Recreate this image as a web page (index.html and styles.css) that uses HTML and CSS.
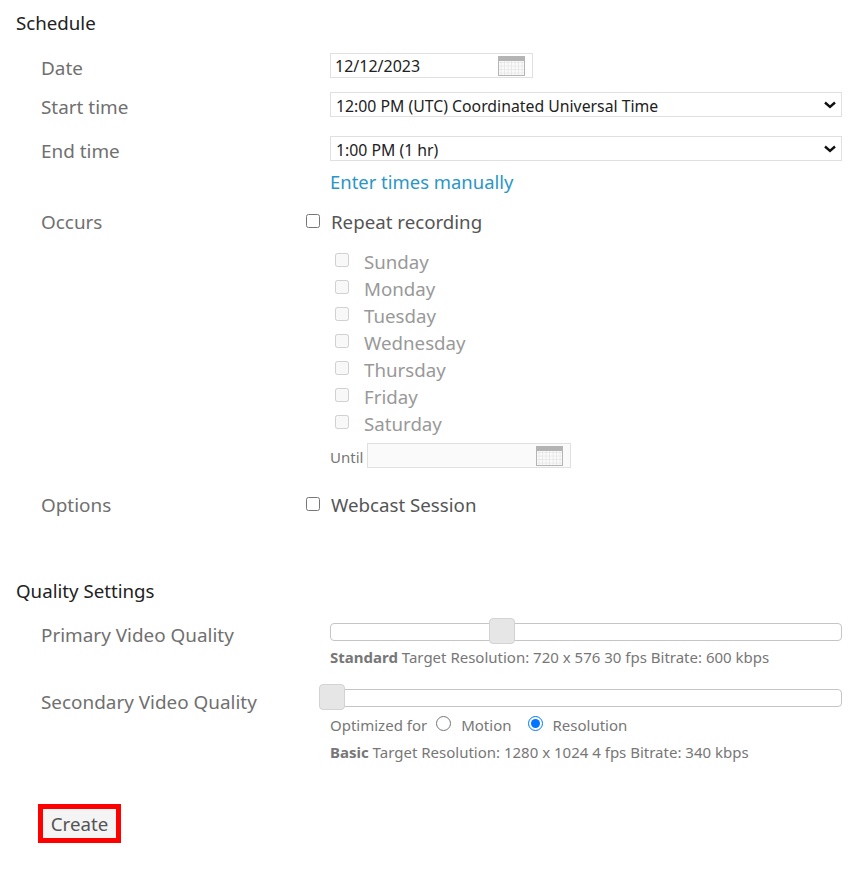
FILE: index.html
```html
<!DOCTYPE html>
<html>
  <head>
    <meta charset="utf-8" />
    <title>Schedule</title>
    <link rel="stylesheet" href="styles.css">
  </head>

  <body>
    <form class="page">
      <h3 class="section-title">Schedule</h3>

      <div class="row row-date">
        <label class="row-label">Date</label>
        <div class="date-input">
          <span class="date-value">12/12/2023</span>
          <svg class="cal-icon" viewBox="0 0 27 20"><use href="#cal"></use></svg>
        </div>
      </div>

      <div class="row row-start">
        <label class="row-label">Start time</label>
        <select class="time-select"><option>12:00 PM (UTC) Coordinated Universal Time</option></select>
      </div>

      <div class="row row-end">
        <label class="row-label">End time</label>
        <div>
          <select class="time-select"><option>1:00 PM (1 hr)</option></select>
          <a class="manual-link" href="#">Enter times manually</a>
        </div>
      </div>

      <div class="row row-occurs">
        <label class="row-label">Occurs</label>
        <label class="check-line"><input type="checkbox"> Repeat recording</label>
      </div>

      <div class="row">
        <span></span>
        <div class="days">
          <label class="day"><input type="checkbox" disabled> Sunday</label>
          <label class="day"><input type="checkbox" disabled> Monday</label>
          <label class="day"><input type="checkbox" disabled> Tuesday</label>
          <label class="day"><input type="checkbox" disabled> Wednesday</label>
          <label class="day"><input type="checkbox" disabled> Thursday</label>
          <label class="day"><input type="checkbox" disabled> Friday</label>
          <label class="day"><input type="checkbox" disabled> Saturday</label>
          <div class="until">
            <span class="until-label">Until</span>
            <div class="date-input disabled">
              <svg class="cal-icon" viewBox="0 0 27 20"><use href="#cal"></use></svg>
            </div>
          </div>
        </div>
      </div>

      <div class="row row-options">
        <label class="row-label">Options</label>
        <label class="check-line"><input type="checkbox"> Webcast Session</label>
      </div>

      <h3 class="section-title quality-title">Quality Settings</h3>

      <div class="row row-primary">
        <label class="row-label">Primary Video Quality</label>
        <div>
          <div class="slider"><span class="handle handle-standard"></span></div>
          <p class="quality-note"><b>Standard</b> Target Resolution: 720 x 576 30 fps Bitrate: 600 kbps</p>
        </div>
      </div>

      <div class="row row-secondary">
        <label class="row-label">Secondary Video Quality</label>
        <div>
          <div class="slider"><span class="handle handle-basic"></span></div>
          <div class="optimized">
            <span>Optimized for</span>
            <label class="radio"><input type="radio" name="optimize"> Motion</label>
            <label class="radio"><input type="radio" name="optimize" checked> Resolution</label>
          </div>
          <p class="quality-note basic-note"><b>Basic</b> Target Resolution: 1280 x 1024 4 fps Bitrate: 340 kbps</p>
        </div>
      </div>

      <button type="button" class="create-button">Create</button>
    </form>

    <svg width="0" height="0" class="defs">
      <defs>
        <pattern id="cal-grid" width="3.5" height="3.5" patternUnits="userSpaceOnUse">
          <path d="M3.5 0V3.5H0" fill="none" stroke="#dcdcdc" stroke-width="1"></path>
        </pattern>
        <g id="cal">
          <rect x="0" y="0" width="27" height="20" fill="#b4b4b4"></rect>
          <rect x="1" y="5" width="25" height="14" fill="#fafafa"></rect>
          <rect x="1" y="5" width="25" height="14" fill="url(#cal-grid)"></rect>
        </g>
      </defs>
    </svg>
  </body>
</html>
```

FILE: styles.css
```css
body {
  margin: 0;
  font-family: 'Noto Sans', 'Open Sans', sans-serif;
  background: white;
  color: #333;
}

.page {
  padding: 11px 20px 33px 16px;
}

.defs {
  display: block;
  height: 0;
}

.section-title {
  margin: 0;
  font-size: 18.7px;
  font-weight: 400;
  line-height: 23px;
  color: #222;
}

.quality-title {
  margin-top: 62px;
}

.row {
  display: grid;
  grid-template-columns: 289px 1fr;
  padding-left: 25px;
}

.row-label {
  font-size: 18.9px;
  line-height: 24px;
  color: #707070;
}

.row-date {
  margin-top: 19px;
}

.row-date .row-label {
  padding-top: 3px;
}

.row-start {
  margin-top: 12px;
}

.row-end {
  margin-top: 17px;
}

.row-start .row-label,
.row-end .row-label {
  padding-top: 3px;
}

.row-occurs {
  margin-top: 15px;
}

.row-options {
  margin-top: 25px;
}

.row-primary {
  margin-top: 21px;
}

.row-secondary {
  margin-top: 22px;
}

.row-secondary .row-label {
  padding-top: 1px;
}

.date-input {
  display: flex;
  align-items: center;
  justify-content: space-between;
  box-sizing: border-box;
  width: 203px;
  height: 25px;
  padding: 0 7px 0 4px;
  border: 1px solid #e0e0e0;
  font-size: 16px;
  color: #222;
}

.date-input.disabled {
  width: 204px;
  background: #fafafa;
  justify-content: flex-end;
}

.cal-icon {
  width: 27px;
  height: 20px;
}

.time-select {
  display: block;
  box-sizing: border-box;
  width: 100%;
  height: 25px;
  padding: 2px 0 0 5px;
  border: 1px solid #e0e0e0;
  border-radius: 0;
  appearance: none;
  background: white url("data:image/svg+xml,%3Csvg xmlns='http://www.w3.org/2000/svg' width='12' height='8' viewBox='0 0 12 8'%3E%3Cpath d='M1 1.5l5 4.5 5-4.5' fill='none' stroke='%23111' stroke-width='2.4'/%3E%3C/svg%3E") no-repeat right 5px center;
  font-family: inherit;
  font-size: 15.8px;
  color: #222;
}

.manual-link {
  display: block;
  margin-top: 8px;
  font-size: 18.45px;
  line-height: 26px;
  color: #2a96c8;
  text-decoration: none;
}

.check-line {
  display: flex;
  align-items: center;
  margin-left: -24px;
  font-size: 18.7px;
  line-height: 24px;
  color: #555;
}

.check-line input {
  width: 14px;
  height: 14px;
  margin: 0 11px 2px 0;
}

.days {
  padding-top: 14px;
}

.day {
  display: flex;
  align-items: center;
  height: 27px;
  padding-left: 5px;
  font-size: 18.7px;
  color: #999;
}

.day input {
  width: 14px;
  height: 14px;
  margin: 0 15px 4px 0;
}

.until {
  display: flex;
  align-items: center;
  gap: 4px;
  margin-top: 6px;
}

.until-label {
  padding-top: 2px;
  font-size: 15px;
  color: #777;
}

.slider {
  position: relative;
  box-sizing: border-box;
  height: 18px;
  border: 1px solid #c5c5c5;
  border-radius: 4px;
  background: white;
}

.handle {
  position: absolute;
  top: -6px;
  box-sizing: border-box;
  width: 26px;
  height: 26px;
  border: 1px solid #d3d3d3;
  border-radius: 4px;
  background: #e6e6e6;
}

.handle-standard {
  left: 158px;
}

.handle-basic {
  left: -12px;
}

.quality-note {
  margin: 7px 0 0;
  font-size: 15px;
  line-height: 19px;
  color: #777;
}

.basic-note {
  margin-top: 8px;
}

.optimized {
  display: flex;
  align-items: center;
  margin-top: 8px;
  font-size: 15px;
  line-height: 20px;
  color: #777;
}

.radio {
  display: flex;
  align-items: center;
  margin-left: 9px;
  margin-right: 7px;
  font-size: 15px;
}

.radio input {
  width: 15px;
  height: 15px;
  margin: 0 10px 3px 0;
}

.create-button {
  display: block;
  box-sizing: border-box;
  width: 83px;
  height: 39px;
  margin: 42px 0 0 22px;
  border: 5px solid #ff0000;
  border-radius: 0;
  background: #f4f4f4;
  font-family: inherit;
  font-size: 18.7px;
  color: #555;
}
```
